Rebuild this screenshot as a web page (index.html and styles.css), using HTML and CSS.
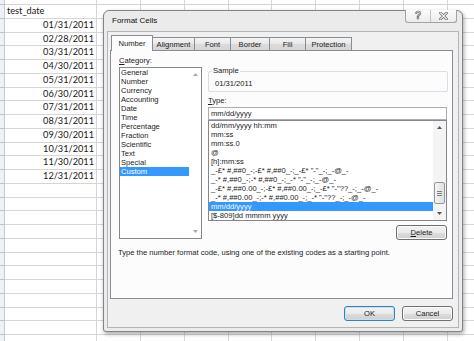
FILE: index.html
```html
<!DOCTYPE html>
<html>
<head>
<meta charset="utf-8">
<meta name="format-detection" content="telephone=no, date=no">
<link rel="stylesheet" href="styles.css">
</head>
<body>
<div class="sheet">
  <div class="rowhdr"></div>
  <div class="col-a">
    <div class="cell hdr">test_date</div>
    <div class="cell num">01/31/2011</div>
    <div class="cell num">02/28/2011</div>
    <div class="cell num">03/31/2011</div>
    <div class="cell num">04/30/2011</div>
    <div class="cell num">05/31/2011</div>
    <div class="cell num">06/30/2011</div>
    <div class="cell num">07/31/2011</div>
    <div class="cell num">08/31/2011</div>
    <div class="cell num">09/30/2011</div>
    <div class="cell num">10/31/2011</div>
    <div class="cell num">11/30/2011</div>
    <div class="cell num">12/31/2011</div>
  </div>
  <div class="cols"></div>
</div>

<div class="dialog">
  <div class="titlebar">
    <span class="title">Format Cells</span>
    <div class="capbtns">
      <span class="cap help">?</span>
      <span class="cap close"><svg width="9" height="8" viewBox="0 0 9 8"><path d="M1.5 1 L7.5 7 M7.5 1 L1.5 7" stroke="#6a6a6a" stroke-width="2.6" stroke-linecap="square"/><path d="M1.5 1 L7.5 7 M7.5 1 L1.5 7" stroke="#f4f4f4" stroke-width="1.1" stroke-linecap="square"/></svg></span>
    </div>
  </div>
  <div class="client">
    <div class="tabs">
      <span class="tab active">Number</span>
      <span class="tab w-align">Alignment</span>
      <span class="tab w-font">Font</span>
      <span class="tab w-border">Border</span>
      <span class="tab w-fill">Fill</span>
      <span class="tab w-prot">Protection</span>
    </div>
    <div class="panel">
      <div class="main">
        <div class="catcol">
          <div class="label"><u>C</u>ategory:</div>
          <div class="listbox cat">
            <div class="items">
              <div class="item">General</div>
              <div class="item">Number</div>
              <div class="item">Currency</div>
              <div class="item">Accounting</div>
              <div class="item">Date</div>
              <div class="item">Time</div>
              <div class="item">Percentage</div>
              <div class="item">Fraction</div>
              <div class="item">Scientific</div>
              <div class="item">Text</div>
              <div class="item">Special</div>
              <div class="item sel">Custom</div>
            </div>
            <div class="vscroll dis">
              <span class="arr"><svg width="5" height="3" viewBox="0 0 5 3"><path d="M0 3 L2.5 0 L5 3 Z" fill="#a9a9a9"/></svg></span>
              <span class="arr"><svg width="5" height="3" viewBox="0 0 5 3"><path d="M0 0 L2.5 3 L5 0 Z" fill="#a9a9a9"/></svg></span>
            </div>
          </div>
        </div>
        <div class="rightcol">
          <fieldset class="sample">
            <legend>Sample</legend>
            <div class="sample-val">01/31/2011</div>
          </fieldset>
          <div class="label type-label"><u>T</u>ype:</div>
          <div class="input">mm/dd/yyyy</div>
          <div class="listbox fmt">
            <div class="items">
              <div class="item">dd/mm/yyyy hh:mm</div>
              <div class="item">mm:ss</div>
              <div class="item">mm:ss.0</div>
              <div class="item">@</div>
              <div class="item">[h]:mm:ss</div>
              <div class="item">_-£* #,##0_-;-£* #,##0_-;_-£* "-"_-;_-@_-</div>
              <div class="item">_-* #,##0_-;-* #,##0_-;_-* "-"_-;_-@_-</div>
              <div class="item">_-£* #,##0.00_-;-£* #,##0.00_-;_-£* "-"??_-;_-@_-</div>
              <div class="item">_-* #,##0.00_-;-* #,##0.00_-;_-* "-"??_-;_-@_-</div>
              <div class="item sel">mm/dd/yyyy</div>
              <div class="item">[$-809]dd mmmm yyyy</div>
            </div>
            <div class="vscroll">
              <span class="arr"><svg width="5" height="3" viewBox="0 0 5 3"><path d="M0 3 L2.5 0 L5 3 Z" fill="#555"/></svg></span>
              <span class="thumb"><i></i><i></i><i></i></span>
              <span class="arr"><svg width="5" height="3" viewBox="0 0 5 3"><path d="M0 0 L2.5 3 L5 0 Z" fill="#555"/></svg></span>
            </div>
          </div>
          <div class="delrow"><button class="btn del"><u>D</u>elete</button></div>
        </div>
      </div>
      <div class="desc">Type the number format code, using one of the existing codes as a starting point.</div>
    </div>
    <div class="footer">
      <button class="btn ok">OK</button>
      <button class="btn">Cancel</button>
    </div>
  </div>
</div>
</body>
</html>
```

FILE: styles.css
```css
* { box-sizing: border-box; margin: 0; padding: 0; }
html, body { width: 474px; height: 341px; overflow: hidden; }
body {
  position: relative;
  background: #fff;
  font-family: "Liberation Sans", Arial, sans-serif;
  color: #1b1b1b;
}

/* spreadsheet */
.sheet {
  display: flex;
  height: 341px;
  background-image: repeating-linear-gradient(to bottom, #d6d6d6 0 1px, transparent 1px 13.75px);
  background-position: 0 4px;
}
.rowhdr {
  width: 5px;
  border-right: 1px solid #c3cad4;
  background-color: #eef1f5;
  background-image: repeating-linear-gradient(to bottom, #b8c2cf 0 1px, transparent 1px 13.75px);
  background-position: 0 4px;
}
.col-a {
  width: 92px;
  border-right: 1px solid #d6d6d6;
  padding-top: 4px;
}
.cols {
  flex: 1;
  background-image: repeating-linear-gradient(to right, transparent 0 42.85px, #d6d6d6 42.85px 43.85px);
}
.cell {
  height: 13.75px;
  line-height: 14px;
  font-family: "Lato", "Liberation Sans", sans-serif;
  font-size: 9.2px;
  color: #151515;
  white-space: nowrap;
}
.cell.hdr { padding-left: 2px; }
.cell.num { text-align: right; padding-right: 2px; }

/* dialog */
.dialog {
  position: absolute;
  left: 103px;
  top: 10px;
  width: 360px;
  height: 322px;
  background: #ebebeb;
  border: 1px solid #80858a;
  border-radius: 6px 6px 3px 3px;
  box-shadow: 1px 2px 4px rgba(0, 0, 0, 0.35);
  padding: 0 3px 3px 3px;
  display: flex;
  flex-direction: column;
  font-size: 7.6px;
}
.titlebar {
  height: 21px;
  display: flex;
  align-items: flex-start;
}
.title {
  padding-left: 5px;
  padding-top: 5px;
  font-size: 8px;
  line-height: 9px;
  color: #111;
}
.capbtns {
  margin-left: auto;
  margin-right: 2px;
  margin-top: -1px;
  height: 13px;
  display: flex;
  border: 1px solid #a3a3a3;
  border-top: none;
  border-radius: 0 0 3px 3px;
  background: linear-gradient(#fbfbfb, #ececec);
}
.cap {
  display: flex;
  align-items: center;
  justify-content: center;
  width: 24px;
}
.cap.close { width: 26px; border-left: 1px solid #c4c4c4; }
.cap.help {
  font-size: 10px;
  font-weight: bold;
  color: #f4f4f4;
  -webkit-text-stroke: 0.7px #6a6a6a;
  line-height: 10px;
}

.client {
  flex: 1;
  background: #f0f0f0;
  border: 1px solid #b4b4b4;
  padding: 3px 5px 6px 2px;
  display: flex;
  flex-direction: column;
}

/* tabs */
.tabs {
  display: flex;
  height: 15px;
  padding-left: 1px;
  position: relative;
  z-index: 1;
  align-items: flex-start;
}
.tab {
  height: 13px;
  margin-top: 2px;
  border: 1px solid #898c95;
  border-bottom: none;
  background: linear-gradient(#f5f5f5, #e8e8e8 50%, #dcdcdc 51%, #d6d6d6);
  display: flex;
  align-items: center;
  justify-content: center;
  line-height: 9px;
  margin-left: -1px;
  white-space: nowrap;
}
.tab.active {
  width: 42px;
  height: 16px;
  margin-top: 0;
  margin-left: 0;
  background: #fcfcfc;
  position: relative;
  z-index: 2;
  padding-bottom: 1px;
}
.w-align { width: 43px; }
.w-font { width: 37px; }
.w-border { width: 40px; }
.w-fill { width: 37px; }
.w-prot { width: 47px; }

.panel {
  height: 249px;
  border: 1px solid #898c95;
  background: #fcfcfc;
  padding: 5px 4px 0 8px;
  display: flex;
  flex-direction: column;
}
.main {
  display: flex;
  gap: 6px;
}
.label {
  line-height: 10px;
  height: 10px;
}
.catcol { width: 83px; }
.listbox {
  display: flex;
  border: 1px solid #828790;
  background: #fff;
}
.listbox.cat { height: 172px; margin-top: 1px; }
.items {
  flex: 1;
  overflow: hidden;
}
.item {
  height: 9px;
  line-height: 9px;
  white-space: nowrap;
  overflow: hidden;
  padding-left: 1px;
  color: #1b1b1b;
}
.fmt .item { padding-left: 2px; font-size: 7.6px; }
.item.sel { background: #3399ff; color: #fff; }
.vscroll {
  width: 12px;
  display: flex;
  flex-direction: column;
  justify-content: space-between;
  background: #f4f4f4;
}
.vscroll.dis { background: #fff; }
.fmt .vscroll { width: 13px; }
.arr {
  height: 13px;
  display: flex;
  align-items: center;
  justify-content: center;
}
.thumb {
  margin-top: auto;
  margin-bottom: 3px;
  height: 22px;
  margin-left: 1px;
  margin-right: 1px;
  border: 1px solid #979797;
  border-radius: 2px;
  background: linear-gradient(to right, #f3f3f3, #e2e2e2);
  display: flex;
  flex-direction: column;
  align-items: center;
  justify-content: center;
  gap: 1px;
}
.thumb i {
  display: block;
  width: 5px;
  height: 1px;
  background: #7d7d7d;
}

.rightcol {
  width: 240px;
  padding-top: 10px;
  display: flex;
  flex-direction: column;
}
.sample {
  border: 1px solid #d5dfe5;
  border-radius: 2px;
  padding: 3px 6px 1px 6px;
  height: 26px;
}
.sample legend {
  padding: 0 1px;
  margin-left: -3px;
  line-height: 10px;
}
.sample-val { line-height: 10px; }
.type-label { margin-top: 4px; }
.input {
  margin-top: 1px;
  width: 239px;
  height: 13px;
  border: 1px solid #abadb3;
  background: #fff;
  padding-left: 2px;
  line-height: 11px;
}
.listbox.fmt { width: 239px; height: 101px; }
.delrow {
  display: flex;
  justify-content: flex-end;
  padding-right: 1px;
  margin-top: 4px;
}
.btn {
  height: 15px;
  width: 51px;
  border: 1px solid #707070;
  border-radius: 3px;
  background: linear-gradient(#f2f2f2, #ebebeb 50%, #dddddd 51%, #cfcfcf);
  box-shadow: inset 0 0 0 1px #fafafa;
  font-family: inherit;
  font-size: 7.6px;
  color: #1b1b1b;
  line-height: 11px;
}
.btn.ok {
  border-color: #3c7fb1;
  box-shadow: inset 0 0 0 1px #bfe3f5;
}
.desc {
  margin-top: 8px;
  line-height: 10px;
  margin-left: -1px;
  white-space: nowrap;
}
.footer {
  margin-top: 7px;
  display: flex;
  justify-content: flex-end;
  gap: 7px;
}
```
